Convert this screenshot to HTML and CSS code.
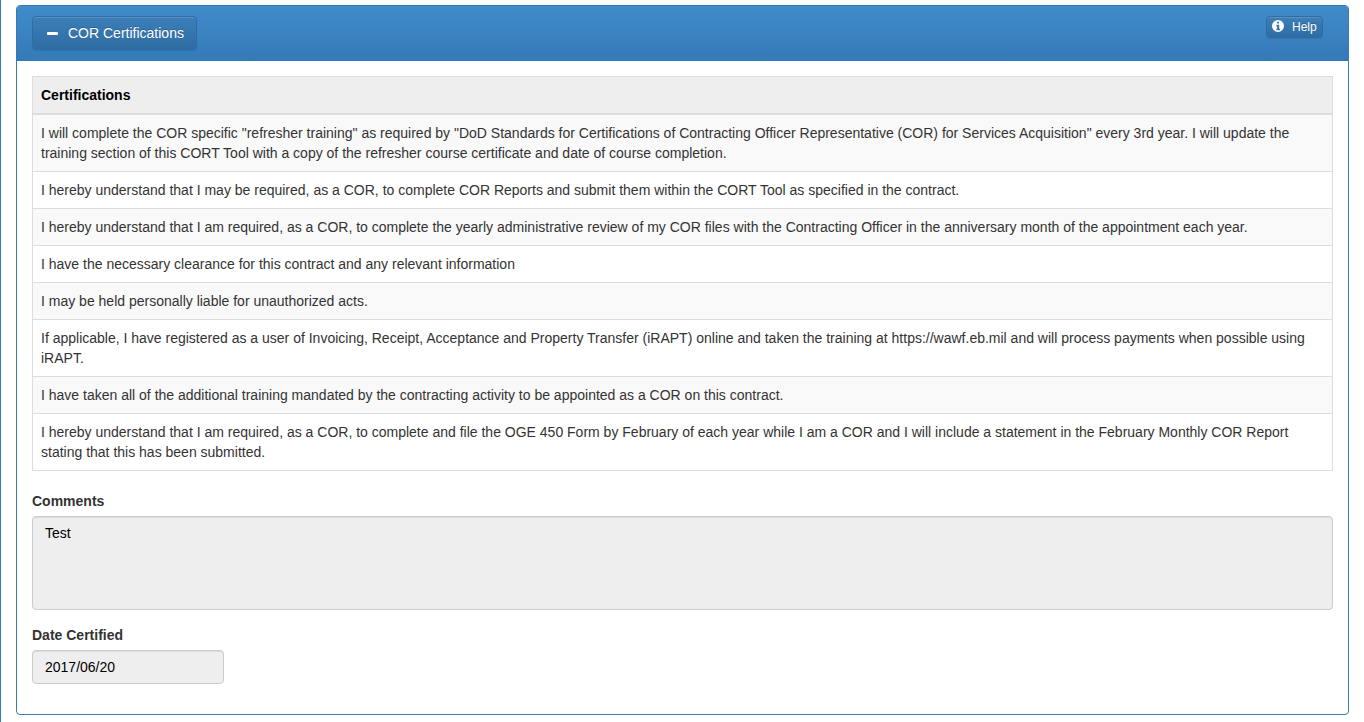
FILE: index.html
```html
<!DOCTYPE html>
<html lang="en">
<head>
<meta charset="utf-8">
<title>COR Certifications</title>
<link rel="stylesheet" href="styles.css">
</head>
<body>
<div class="outer">
  <section class="panel">
    <header class="panel-heading">
      <button class="btn btn-title" type="button"><span class="minus"></span>COR Certifications</button>
      <button class="btn btn-help" type="button">
        <svg class="info" viewBox="0 0 12 12" width="12" height="12" aria-hidden="true"><path fill="#fff" fill-rule="evenodd" d="M6 0a6 6 0 1 1 0 12A6 6 0 0 1 6 0zM5 1.800h2v1.700H5zM4.300 4.800h2.900v3.900h.8v1.500H4.300V8.700h.8V6.300h-.8z"/></svg>
        <span class="help-text">Help</span>
      </button>
    </header>
    <div class="panel-body">
      <table class="table">
        <thead><tr><th>Certifications</th></tr></thead>
        <tbody>
          <tr><td>I will complete the COR specific "refresher training" as required by "DoD Standards for Certifications of Contracting Officer Representative (COR) for Services Acquisition" every 3rd year. I will update the training section of this CORT Tool with a copy of the refresher course certificate and date of course completion.</td></tr>
          <tr><td>I hereby understand that I may be required, as a COR, to complete COR Reports and submit them within the CORT Tool as specified in the contract.</td></tr>
          <tr><td>I hereby understand that I am required, as a COR, to complete the yearly administrative review of my COR files with the Contracting Officer in the anniversary month of the appointment each year.</td></tr>
          <tr><td>I have the necessary clearance for this contract and any relevant information</td></tr>
          <tr><td>I may be held personally liable for unauthorized acts.</td></tr>
          <tr><td>If applicable, I have registered as a user of Invoicing, Receipt, Acceptance and Property Transfer (iRAPT) online and taken the training at https://wawf.eb.mil and will process payments when possible using iRAPT.</td></tr>
          <tr><td>I have taken all of the additional training mandated by the contracting activity to be appointed as a COR on this contract.</td></tr>
          <tr><td>I hereby understand that I am required, as a COR, to complete and file the OGE 450 Form by February of each year while I am a COR and I will include a statement in the February Monthly COR Report stating that this has been submitted.</td></tr>
        </tbody>
      </table>
      <div class="form-group comments">
        <label class="label" for="comments">Comments</label>
        <textarea class="control area" id="comments" disabled>Test</textarea>
      </div>
      <div class="form-group date">
        <label class="label" for="date">Date Certified</label>
        <input class="control field" id="date" type="text" value="2017/06/20" disabled>
      </div>
    </div>
  </section>
</div>
</body>
</html>
```
FILE: styles.css
```css
* { box-sizing: border-box; }
html, body { margin: 0; height: 100%; overflow: hidden; background: #fff; }
body { font: 14px/20px "Liberation Sans", Arial, sans-serif; color: #333; }
.outer { height: 722px; padding: 5px 15px 0 15px; border-left: 1px solid #337ab7; }
.panel { height: 710px; border: 1px solid #337ab7; border-radius: 4px; overflow: hidden; background: #fff; }
.panel-heading {
  height: 55px; padding: 10px 15px; display: flex; justify-content: space-between; align-items: flex-start;
  background: linear-gradient(to bottom, #428bca 0%, #337ab7 100%);
}
.btn {
  display: inline-flex; align-items: center; color: #fff; font-family: inherit; font-size: 14px; line-height: 20px;
  border: 1px solid #2e6da4; border-radius: 4px; cursor: pointer;
  background: linear-gradient(to bottom, #3c7fb9 0%, #2f6ca3 100%);
  box-shadow: inset 0 1px 0 rgba(255,255,255,.15), 0 1px 1px rgba(0,0,0,.075);
  text-shadow: 0 -1px 0 rgba(0,0,0,.2);
}
.btn-title { height: 34px; padding: 0 12px 0 14px; width: 165px; }
.minus { width: 11px; height: 3px; margin-right: 10px; background: #fff; border-radius: 1px; }
.btn-help { height: 22px; width: 57px; padding: 0 0 0 5px; font-size: 12px; line-height: 18px; margin-right: 10px; gap: 8px; }
.info { flex: none; position: relative; top: -1px; }
.panel-body { padding: 15px; }
.table { width: 100%; border-collapse: collapse; border: 1px solid #ddd; margin-bottom: 20px; }
.table th { height: 37px; padding: 8px; text-align: left; color: #000; background: #eee; border: 1px solid #ddd; border-bottom-width: 2px; }
.table td { padding: 8px; border: 1px solid #ddd; }
.table tbody tr:nth-child(odd) { background: #f9f9f9; }
.form-group { margin-bottom: 15px; }
.label { display: block; font-weight: 700; margin-bottom: 5px; }
.control {
  display: block; font-family: inherit; font-size: 14px; line-height: 20px; color: #000; opacity: 1; -webkit-text-fill-color: #000;
  background: #eee; border: 1px solid #ccc; border-radius: 4px; padding: 6px 12px;
  box-shadow: inset 0 1px 1px rgba(0,0,0,.075);
}
.area { width: 100%; height: 94px; resize: none; overflow: hidden; }
.field { width: 192px; height: 34px; }
```
